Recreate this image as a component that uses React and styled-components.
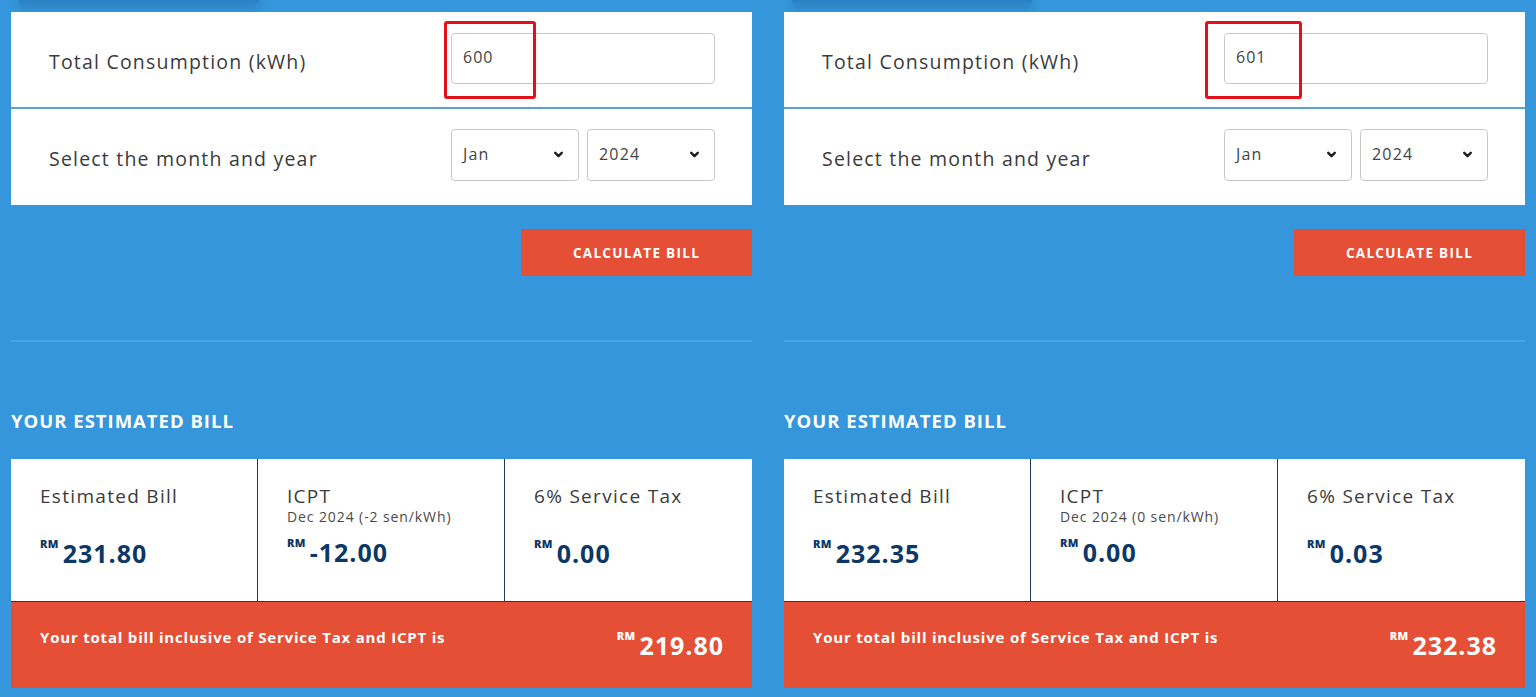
import React from "react";
import styled, { createGlobalStyle } from "styled-components";
import { ChevronDown } from "lucide-react";

const GlobalStyle = createGlobalStyle`
  html, body {
    margin: 0;
    padding: 0;
    background: #3596db;
    font-family: "Open Sans", "Liberation Sans", sans-serif;
  }
`;

const panels = [
  {
    kwh: "600",
    markOffset: -7,
    markWidth: 92,
    estimated: "231.80",
    icptNote: "Dec 2024 (-2 sen/kWh)",
    icpt: "-12.00",
    tax: "0.00",
    total: "219.80",
  },
  {
    kwh: "601",
    markOffset: -19,
    markWidth: 97,
    estimated: "232.35",
    icptNote: "Dec 2024 (0 sen/kWh)",
    icpt: "0.00",
    tax: "0.03",
    total: "232.38",
  },
];

const Calculator = ({ data }) => {
  return (
    <Panel>
      <TopTab />
      <FormCard>
        <FormRow>
          <FieldLabel>Total Consumption (kWh)</FieldLabel>
          <InputWrap>
            <KwhInput defaultValue={data.kwh} />
            <Highlight $left={data.markOffset} $width={data.markWidth} />
          </InputWrap>
        </FormRow>
        <FormRow>
          <FieldLabel>Select the month and year</FieldLabel>
          <Selects>
            <SelectBox>
              <span>Jan</span>
              <ChevronDown size={13} strokeWidth={4.5} />
            </SelectBox>
            <SelectBox>
              <span>2024</span>
              <ChevronDown size={13} strokeWidth={4.5} />
            </SelectBox>
          </Selects>
        </FormRow>
      </FormCard>

      <ButtonRow>
        <CalcButton>CALCULATE BILL</CalcButton>
      </ButtonRow>

      <Divider />

      <SectionTitle>YOUR ESTIMATED BILL</SectionTitle>

      <ResultGrid>
        <ResultCell>
          <CellLabel>Estimated Bill</CellLabel>
          <Amount $gap={30}>
            <Currency>RM</Currency>
            {data.estimated}
          </Amount>
        </ResultCell>
        <ResultCell>
          <CellLabel>ICPT</CellLabel>
          <CellNote>{data.icptNote}</CellNote>
          <Amount $gap={11}>
            <Currency>RM</Currency>
            {data.icpt}
          </Amount>
        </ResultCell>
        <ResultCell>
          <CellLabel>6% Service Tax</CellLabel>
          <Amount $gap={30}>
            <Currency>RM</Currency>
            {data.tax}
          </Amount>
        </ResultCell>
      </ResultGrid>

      <TotalBar>
        <TotalText>Your total bill inclusive of Service Tax and ICPT is</TotalText>
        <TotalAmount>
          <Currency $light>RM</Currency>
          {data.total}
        </TotalAmount>
      </TotalBar>
    </Panel>
  );
};

export default function App() {
  return (
    <>
      <GlobalStyle />
      <Page>
        {panels.map((p) => (
          <Calculator key={p.kwh} data={p} />
        ))}
      </Page>
    </>
  );
}

const Page = styled.div`
  display: flex;
  gap: 32px;
  padding: 0 11px;
  height: 697px;
  overflow: hidden;
`;

const Panel = styled.div`
  width: 741px;
  display: flex;
  flex-direction: column;
`;

const TopTab = styled.div`
  width: 240px;
  height: 3px;
  margin-left: 8px;
  background: #2a83c4;
  box-shadow: 0 2px 8px rgba(10, 45, 90, 0.55);
`;

const FormCard = styled.div`
  margin-top: 9px;
  background: #fff;
`;

const FormRow = styled.div`
  display: flex;
  align-items: center;
  justify-content: space-between;
  height: 96px;
  padding: 0 37px 0 38px;
  &:first-child {
    border-bottom: 2px solid #5ba2d6;
    height: 95px;
  }
`;

const FieldLabel = styled.div`
  font-size: 19.5px;
  color: #3b3b3b;
  letter-spacing: 1.2px;
  margin-top: 3px;
`;

const InputWrap = styled.div`
  position: relative;
  width: 264px;
  height: 51px;
  margin-top: -2px;
`;

const KwhInput = styled.input`
  box-sizing: border-box;
  width: 100%;
  height: 100%;
  border: 1px solid #c9c9c9;
  border-radius: 4px;
  padding: 0 11px 4px;
  font-family: "Open Sans", "Liberation Sans", sans-serif;
  font-size: 16px;
  letter-spacing: 1px;
  color: #444;
  outline: none;
`;

const Highlight = styled.div`
  position: absolute;
  left: ${(p) => p.$left}px;
  top: -12px;
  width: ${(p) => p.$width}px;
  height: 78px;
  box-sizing: border-box;
  border: 3px solid #e3101a;
  border-radius: 3px;
  pointer-events: none;
`;

const Selects = styled.div`
  display: flex;
  gap: 8px;
  margin-top: -4px;
`;

const SelectBox = styled.div`
  box-sizing: border-box;
  width: 128px;
  height: 52px;
  border: 1px solid #c9c9c9;
  border-radius: 4px;
  display: flex;
  align-items: center;
  justify-content: space-between;
  padding: 0 13px 2px 11px;
  font-size: 16px;
  letter-spacing: 1.2px;
  color: #444;
  svg {
    color: #1e1e1e;
  }
`;

const ButtonRow = styled.div`
  display: flex;
  justify-content: flex-end;
  margin-top: 24px;
`;

const CalcButton = styled.button`
  width: 231px;
  height: 47px;
  border: none;
  background: #e54f36;
  color: #fff;
  font-family: "Open Sans", "Liberation Sans", sans-serif;
  font-weight: 700;
  font-size: 13.5px;
  letter-spacing: 1.3px;
  cursor: pointer;
`;

const Divider = styled.hr`
  margin: 64px 0 0;
  border: none;
  height: 2px;
  background: #45a5e8;
`;

const SectionTitle = styled.h2`
  margin: 66px 0 0;
  color: #fff;
  font-size: 18.5px;
  font-weight: 700;
  letter-spacing: 1px;
  line-height: 26px;
`;

const ResultGrid = styled.div`
  margin-top: 25px;
  display: grid;
  grid-template-columns: 247px 247px 247px;
  background: #fff;
  border-bottom: 1px solid #1f3a5c;
`;

const ResultCell = styled.div`
  height: 142px;
  box-sizing: border-box;
  padding: 25px 20px 0 29px;
  &:not(:last-child) {
    border-right: 1.5px solid #1f3a5c;
  }
`;

const CellLabel = styled.div`
  font-size: 19px;
  color: #3b3b3b;
  letter-spacing: 1.3px;
  line-height: 24px;
`;

const CellNote = styled.div`
  font-size: 14px;
  color: #4a4a4a;
  letter-spacing: 0.9px;
  line-height: 18px;
`;

const Amount = styled.div`
  margin-top: ${(p) => p.$gap}px;
  font-size: 25px;
  font-weight: 700;
  color: #0c3766;
  letter-spacing: 1px;
  line-height: 30px;
  display: flex;
  align-items: flex-start;
`;

const Currency = styled.span`
  font-size: 11px;
  font-weight: 800;
  line-height: 11px;
  letter-spacing: 0.3px;
  margin-right: 4px;
  color: ${(p) => (p.$light ? "#fff" : "#0c3766")};
`;

const TotalBar = styled.div`
  height: 86px;
  background: #e54f36;
  display: flex;
  justify-content: space-between;
  align-items: flex-start;
  padding: 0 28px 0 29px;
  color: #fff;
`;

const TotalText = styled.div`
  margin-top: 25px;
  font-size: 15px;
  font-weight: 700;
  letter-spacing: 0.8px;
`;

const TotalAmount = styled.div`
  margin-top: 28px;
  font-size: 25px;
  font-weight: 700;
  letter-spacing: 1px;
  line-height: 30px;
  display: flex;
  align-items: flex-start;
`;
